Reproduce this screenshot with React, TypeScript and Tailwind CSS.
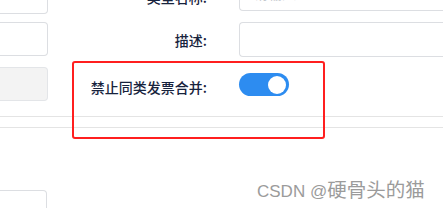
export default function App() {
  return (
    <div className="relative w-[443px] h-[208px] overflow-hidden bg-white font-['Noto_Sans_CJK_SC',sans-serif] text-[14px] text-[#17233d] font-medium">
      <div className="flex flex-col">
        {/* row 1 (cut off) */}
        <div className="flex h-[34px] -mt-[20px]">
          <div className="w-[48px] h-[34px] border border-l-0 border-[#dcdee2] rounded-r-[4px]" />
          <div className="w-[159px] flex items-center justify-end leading-[20px]">类型名称:</div>
          <div className="ml-[32px] flex-1 h-[35px] -mt-[4px] border border-r-0 border-[#dcdee2] rounded-l-[4px] flex items-center pl-[14px] text-[#c5c8ce] font-normal">请输入</div>
        </div>
        {/* row 2 */}
        <div className="flex h-[35px] mt-[8px]">
          <div className="w-[48px] h-[34px] border border-l-0 border-[#dcdee2] rounded-r-[4px]" />
          <div className="w-[159px] h-[36px] flex items-center justify-end leading-[20px]">描述:</div>
          <div className="ml-[32px] flex-1 h-[35px] border border-r-0 border-[#dcdee2] rounded-l-[4px]" />
        </div>
        {/* row 3 */}
        <div className="flex h-[34px] mt-[10px]">
          <div className="w-[48px] h-[34px] bg-[#f3f3f3] border border-l-0 border-[#e3e5e8] rounded-r-[4px]" />
          <div className="w-[159px] mt-[10px] h-[20px] flex items-center justify-end leading-[20px]">禁止同类发票合并:</div>
          <div className="ml-[32px] mt-[6px] w-[50px] h-[23px] rounded-full bg-[#2d8cf0] flex items-center justify-end pr-[3px]">
            <div className="w-[18px] h-[18px] rounded-full bg-white" />
          </div>
        </div>
        <div className="mt-[15px] h-px bg-[#e4e4e4]" />
        <div className="mt-[10px] h-px bg-[#e4e4e4]" />
        <div className="mt-[62px] w-[47px] h-[30px] border border-l-0 border-[#dcdee2] rounded-tr-[4px]" />
      </div>
      {/* annotation */}
      <div className="absolute left-[72px] top-[61px] w-[253px] h-[78px] border-2 border-[#ff1f1f] rounded-[3px]" />
      {/* watermark */}
      <div className="absolute left-[257px] top-[178px] text-[17px] leading-[24px] text-[#9b9b9b] font-normal whitespace-nowrap font-['Liberation_Sans','Noto_Sans_CJK_SC',sans-serif]">
        CSDN @<span className="text-[19.5px]">硬骨头的猫</span>
      </div>
    </div>
  );
}
